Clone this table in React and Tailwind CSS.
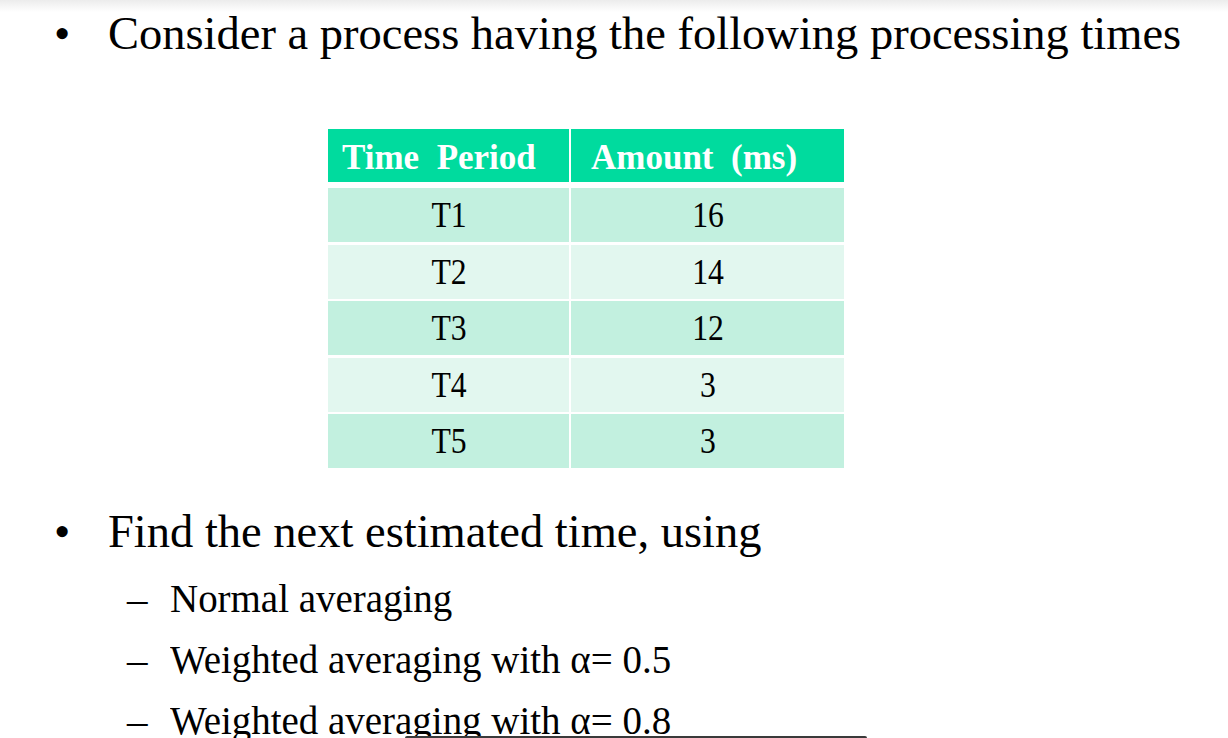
import React from "react";

const rows = [
  { period: "T1", amount: "16" },
  { period: "T2", amount: "14" },
  { period: "T3", amount: "12" },
  { period: "T4", amount: "3" },
  { period: "T5", amount: "3" },
];

const subItems = [
  "Normal averaging",
  "Weighted averaging with α= 0.5",
  "Weighted averaging with α= 0.8",
];

export default function App() {
  return (
    <div
      className="relative w-[1228px] h-[738px] overflow-hidden bg-[linear-gradient(to_bottom,#ececec_0px,#ffffff_12px)] text-black"
      style={{ fontFamily: '"Liberation Serif", "Times New Roman", serif' }}
    >
      {/* bullet 1 */}
      <div className="flex pt-[6px] text-[46.5px] leading-[56px]">
        <span className="w-[108px] pl-[54px]">•</span>
        <span className="whitespace-nowrap">
          Consider a process having the following processing times
        </span>
      </div>

      {/* tabla */}
      <div className="ml-[328px] mt-[67px] w-[516px]">
        <div className="flex h-[53px] gap-[2px] bg-white text-[35px] font-bold text-white">
          <div className="flex w-[241px] items-center bg-[#00db9e] pl-[14px] pt-[6px] whitespace-pre">
            Time  Period
          </div>
          <div className="flex flex-1 items-center bg-[#00db9e] pl-[20px] pt-[6px] whitespace-pre">
            Amount  (ms)
          </div>
        </div>
        <div className="mt-[6px] flex flex-col gap-[2.5px] text-[36px]">
          {rows.map((r, i) => (
            <div key={r.period} className="flex h-[54px] gap-[2px]">
              <div
                className={`flex w-[241px] items-center justify-center ${
                  i % 2 === 0 ? "bg-[#c2f0df]" : "bg-[#e2f7ef]"
                }`}
              >
                <span className="inline-block scale-x-[0.88]">{r.period}</span>
              </div>
              <div
                className={`flex flex-1 items-center justify-center ${
                  i % 2 === 0 ? "bg-[#c2f0df]" : "bg-[#e2f7ef]"
                }`}
              >
                <span className="inline-block scale-x-[0.88]">{r.amount}</span>
              </div>
            </div>
          ))}
        </div>
      </div>

      {/* bullet 2 */}
      <div className="mt-[36px] flex text-[46.5px] leading-[56px]">
        <span className="w-[108px] pl-[54px]">•</span>
        <span className="whitespace-nowrap">Find the next estimated time, using</span>
      </div>

      <div className="mt-[8px] flex flex-col text-[41px] leading-[61px]">
        {subItems.map((t) => (
          <div key={t} className="flex">
            <span className="w-[170px] pl-[127px]">–</span>
            <span className="inline-block origin-left scale-x-[0.95] whitespace-nowrap">{t}</span>
          </div>
        ))}
      </div>

      {/* barra inferior (casi oculta) */}
      <div className="absolute bottom-0 left-[405px] h-[2px] w-[462px] rounded-t-[3px] bg-[#3a3a3a]" />
    </div>
  );
}
